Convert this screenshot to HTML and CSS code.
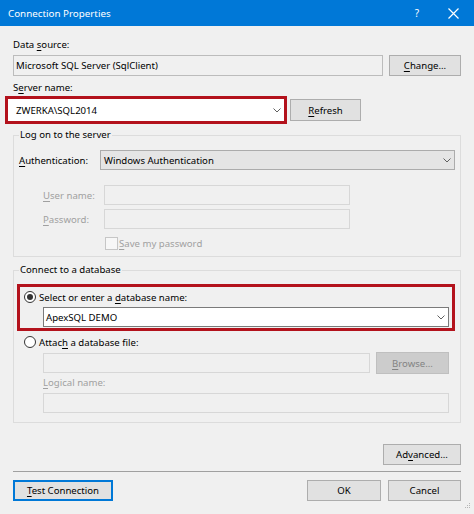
FILE: index.html
```html
<!DOCTYPE html>
<html lang="en">
<head>
    <meta charset="UTF-8">
    <title>Connection Properties</title>
    <link rel="stylesheet" href="styles.css">
</head>
<body>
    <div class="dialog">
        <div class="titlebar">
            <span class="title">Connection Properties</span>
            <span class="title-btn">?</span>
            <span class="title-btn">
                <svg width="11" height="11" viewBox="0 0 11 11"><path d="M0.5 0.5 L10.5 10.5 M10.5 0.5 L0.5 10.5" stroke="#fff" stroke-width="1.2" fill="none"/></svg>
            </span>
        </div>
        <div class="content">
            <div class="label">Data <u>s</u>ource:</div>
            <div class="row data-row">
                <div class="textbox readonly">Microsoft SQL Server (SqlClient)</div>
                <button class="btn change-btn"><u>C</u>hange...</button>
            </div>

            <div class="label server-label">S<u>e</u>rver name:</div>
            <div class="row">
                <div class="highlight server-highlight">
                    <div class="combo server-combo">
                        <span>ZWERKA\SQL2014</span>
                        <svg class="chevron" width="8" height="5" viewBox="0 0 8 5"><polyline points="0.5,0.5 4,4 7.5,0.5" fill="none" stroke="#606060"/></svg>
                    </div>
                </div>
                <button class="btn refresh-btn"><u>R</u>efresh</button>
            </div>

            <fieldset class="group logon-group">
                <legend>Log on to the server</legend>
                <div class="row auth-row">
                    <span class="auth-label"><u>A</u>uthentication:</span>
                    <div class="combo auth-combo">
                        <span>Windows Authentication</span>
                        <svg class="chevron" width="8" height="5" viewBox="0 0 8 5"><polyline points="0.5,0.5 4,4 7.5,0.5" fill="none" stroke="#606060"/></svg>
                    </div>
                </div>
                <div class="row cred-row">
                    <span class="cred-label disabled"><u>U</u>ser name:</span>
                    <div class="textbox disabled-box cred-box"></div>
                </div>
                <div class="row cred-row pass-row">
                    <span class="cred-label disabled"><u>P</u>assword:</span>
                    <div class="textbox disabled-box cred-box"></div>
                </div>
                <div class="row check-row">
                    <span class="checkbox"></span>
                    <span class="disabled"><u>S</u>ave my password</span>
                </div>
            </fieldset>

            <fieldset class="group db-group">
                <legend>Connect to a database</legend>
                <div class="highlight db-highlight">
                    <div class="row radio-row">
                        <svg class="radio" width="12" height="12" viewBox="0 0 12 12"><circle cx="6" cy="6" r="5.5" fill="#fff" stroke="#333"/><circle cx="6" cy="6" r="3" fill="#333"/></svg>
                        <span>Select or enter a <u>d</u>atabase name:</span>
                    </div>
                    <div class="combo db-combo">
                        <span>ApexSQL DEMO</span>
                        <svg class="chevron" width="8" height="5" viewBox="0 0 8 5"><polyline points="0.5,0.5 4,4 7.5,0.5" fill="none" stroke="#606060"/></svg>
                    </div>
                </div>
                <div class="row radio-row attach-row">
                    <svg class="radio" width="12" height="12" viewBox="0 0 12 12"><circle cx="6" cy="6" r="5.5" fill="#fff" stroke="#333"/></svg>
                    <span>Attac<u>h</u> a database file:</span>
                </div>
                <div class="row file-row">
                    <div class="textbox disabled-box file-box"></div>
                    <button class="btn btn-disabled browse-btn"><u>B</u>rowse...</button>
                </div>
                <div class="label disabled logical-label"><u>L</u>ogical name:</div>
                <div class="textbox disabled-box logical-box"></div>
            </fieldset>

            <div class="row advanced-row">
                <button class="btn advanced-btn">Ad<u>v</u>anced...</button>
            </div>

            <div class="separator"></div>

            <div class="row footer">
                <button class="btn default-btn"><u>T</u>est Connection</button>
                <div class="spacer"></div>
                <button class="btn ok-btn">OK</button>
                <button class="btn cancel-btn">Cancel</button>
            </div>
        </div>
        <svg class="grip" width="7" height="7" viewBox="0 0 7 7">
            <rect x="5" y="0" width="1" height="1" fill="#b5b5b5"/>
            <rect x="3" y="2" width="1" height="1" fill="#b5b5b5"/>
            <rect x="5" y="2" width="1" height="1" fill="#b5b5b5"/>
            <rect x="1" y="4" width="1" height="1" fill="#b5b5b5"/>
            <rect x="3" y="4" width="1" height="1" fill="#b5b5b5"/>
            <rect x="5" y="4" width="1" height="1" fill="#b5b5b5"/>
        </svg>
    </div>
</body>
</html>
```

FILE: styles.css
```css
* {
    box-sizing: border-box;
}
body {
    margin: 0;
    font-family: "Noto Sans", "Segoe UI", sans-serif;
    font-size: 9.6px;
    color: #000;
    background-color: #f0f0f0;
}
u {
    text-decoration-thickness: 1px;
    text-underline-offset: 2px;
}
.dialog {
    position: relative;
    width: 474px;
    height: 514px;
    background-color: #f0f0f0;
    overflow: hidden;
}
.titlebar {
    height: 26px;
    background-color: #0078d7;
    color: #fff;
    display: flex;
    align-items: center;
    padding: 0 3px 0 8px;
}
.title {
    flex: 1;
    font-size: 9.8px;
}
.title-btn {
    width: 36px;
    height: 26px;
    display: flex;
    align-items: center;
    justify-content: center;
    font-size: 10px;
}
.content {
    padding: 11px 13px 0 13px;
}
.label {
    height: 16px;
    line-height: 16px;
}
.row {
    display: flex;
    align-items: center;
}
.textbox {
    height: 21px;
    line-height: 19px;
    border: 1px solid #bcbcbc;
    background-color: #f0f0f0;
    padding-left: 2px;
    white-space: nowrap;
}
.btn {
    height: 21px;
    padding: 0;
    font-family: inherit;
    font-size: inherit;
    color: #000;
    background-color: #e1e1e1;
    border: 1px solid #adadad;
}
.combo {
    display: flex;
    align-items: center;
    justify-content: space-between;
    height: 20px;
    padding-right: 3px;
}
.chevron {
    flex-shrink: 0;
}
.highlight {
    border: 3px solid #b3121c;
}
.disabled {
    color: #a0a0a0;
}
.disabled-box {
    height: 20px;
    border-color: #d7d7d7;
}

/* data source */
.data-row {
    margin-top: 2px;
}
.data-row .readonly {
    flex: 1;
}
.change-btn {
    width: 72px;
    margin-left: 6px;
}

/* server */
.server-label {
    margin-top: 4px;
}
.server-highlight {
    width: 282px;
    margin-left: -8px;
}
.server-combo {
    height: 22px;
    background-color: #fff;
    padding-left: 8px;
}
.refresh-btn {
    width: 71px;
    height: 22px;
    margin-left: 3px;
}

/* groups */
.group {
    margin: 0;
    min-width: 0;
    padding: 0 5px 5px 3px;
    border: 1px solid #dcdcdc;
}
.group legend {
    margin-left: 2px;
    padding: 0 1px;
    line-height: 16px;
}
.logon-group {
    margin-top: 3px;
}
.auth-row {
    margin-top: 7px;
}
.auth-label {
    width: 83px;
    padding-left: 2px;
}
.auth-combo {
    flex: 1;
    background-color: #e5e5e5;
    border: 1px solid #acacac;
    padding-left: 3px;
}
.cred-row {
    margin-top: 15px;
}
.pass-row {
    margin-top: 4px;
}
.cred-label {
    width: 87px;
    padding-left: 26px;
}
.cred-box {
    width: 246px;
}
.check-row {
    margin-top: 6px;
    height: 16px;
}
.checkbox {
    width: 13px;
    height: 13px;
    margin-left: 88px;
    margin-right: 1px;
    border: 1px solid #c6c6c6;
    background-color: #f7f7f7;
}

.db-group {
    margin-top: 5px;
    padding-bottom: 9px;
}
.db-highlight {
    margin-top: 6px;
    padding: 2px 0 1px 0;
}
.radio-row {
    height: 16px;
}
.radio {
    margin-right: 3px;
}
.db-highlight .radio-row {
    padding-left: 4px;
}
.db-combo {
    margin: 2px 3px 0 23px;
    background-color: #fff;
    border: 1px solid #7a7a7a;
    padding-left: 2px;
}
.attach-row {
    margin-top: 3px;
    padding-left: 7px;
}
.file-row {
    margin-top: 2px;
    margin-left: 26px;
}
.file-box {
    width: 327px;
}
.browse-btn {
    width: 73px;
    height: 22px;
    margin-left: 6px;
}
.btn-disabled {
    background-color: #cccccc;
    border-color: #bfbfbf;
    color: #838383;
}
.logical-label {
    margin-top: 1px;
    margin-left: 26px;
}
.logical-box {
    margin: 2px 6px 0 26px;
}

/* bottom */
.advanced-row {
    margin-top: 21px;
    justify-content: flex-end;
}
.advanced-btn {
    width: 78px;
}
.separator {
    margin-top: 6px;
    height: 1px;
    background-color: #a0a0a0;
}
.footer {
    margin-top: 8px;
}
.spacer {
    flex: 1;
}
.default-btn {
    width: 100px;
    border: 2px solid #0078d7;
}
.ok-btn {
    width: 74px;
}
.cancel-btn {
    width: 73px;
    margin-left: 7px;
}
.grip {
    position: absolute;
    right: 3px;
    bottom: 4px;
}
```
